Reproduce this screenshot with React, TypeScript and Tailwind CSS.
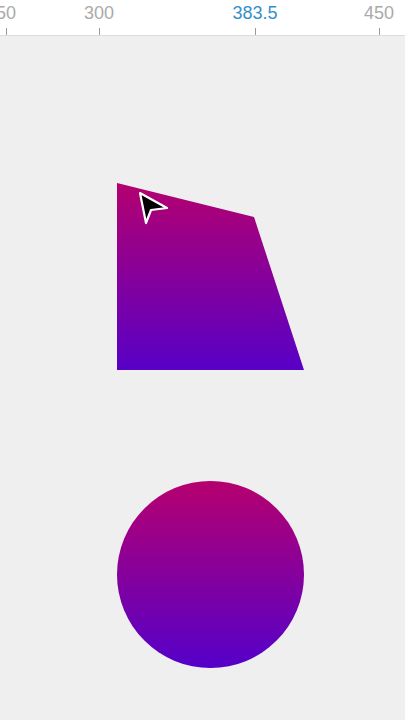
import React from "react";

export default function App() {
  const ticks = [
    { x: 6, label: "50", blue: false },
    { x: 99, label: "300", blue: false },
    { x: 255, label: "383.5", blue: true },
    { x: 379, label: "450", blue: false },
  ];
  return (
    <div className="w-[405px] h-[720px] bg-[#efeff0] overflow-hidden flex flex-col" style={{ fontFamily: "'Liberation Sans', Arial, sans-serif" }}>
      <div className="relative h-[36px] bg-white border-b border-[#dcdcdc] shrink-0">
        {ticks.map((t) => (
          <React.Fragment key={t.label}>
            <span
              className={`absolute top-[1px] -translate-x-1/2 text-[18px] leading-[24px] ${t.blue ? "text-[#3490c8]" : "text-[#aaaaaa]"}`}
              style={{ left: t.x }}
            >
              {t.label}
            </span>
            <div className="absolute top-[28px] h-[7px] w-px bg-[#9a9a9a]" style={{ left: t.x }} />
          </React.Fragment>
        ))}
      </div>
      <div className="relative flex-1">
        <svg width="187" height="187" viewBox="0 0 187 187" className="block ml-[117px] mt-[147px]">
          <defs>
            <linearGradient id="g1" x1="0" y1="0" x2="0" y2="1">
              <stop offset="0" stopColor="#b4006f" />
              <stop offset="1" stopColor="#5800c6" />
            </linearGradient>
          </defs>
          <polygon points="0,0 137,34 187,187 0,187" fill="url(#g1)" />
        </svg>
        <div className="ml-[117px] mt-[111px] w-[187px] h-[187px] rounded-full bg-[linear-gradient(to_bottom,#b6006e,#5500ca)]" />
        <svg width="36" height="38" viewBox="0 0 36 38" className="absolute left-[136px] top-[153px]">
          <polygon points="4,4 31,19 15,21 10,34" fill="#000" stroke="#fff" strokeWidth="2.2" strokeLinejoin="round" />
        </svg>
      </div>
    </div>
  );
}
